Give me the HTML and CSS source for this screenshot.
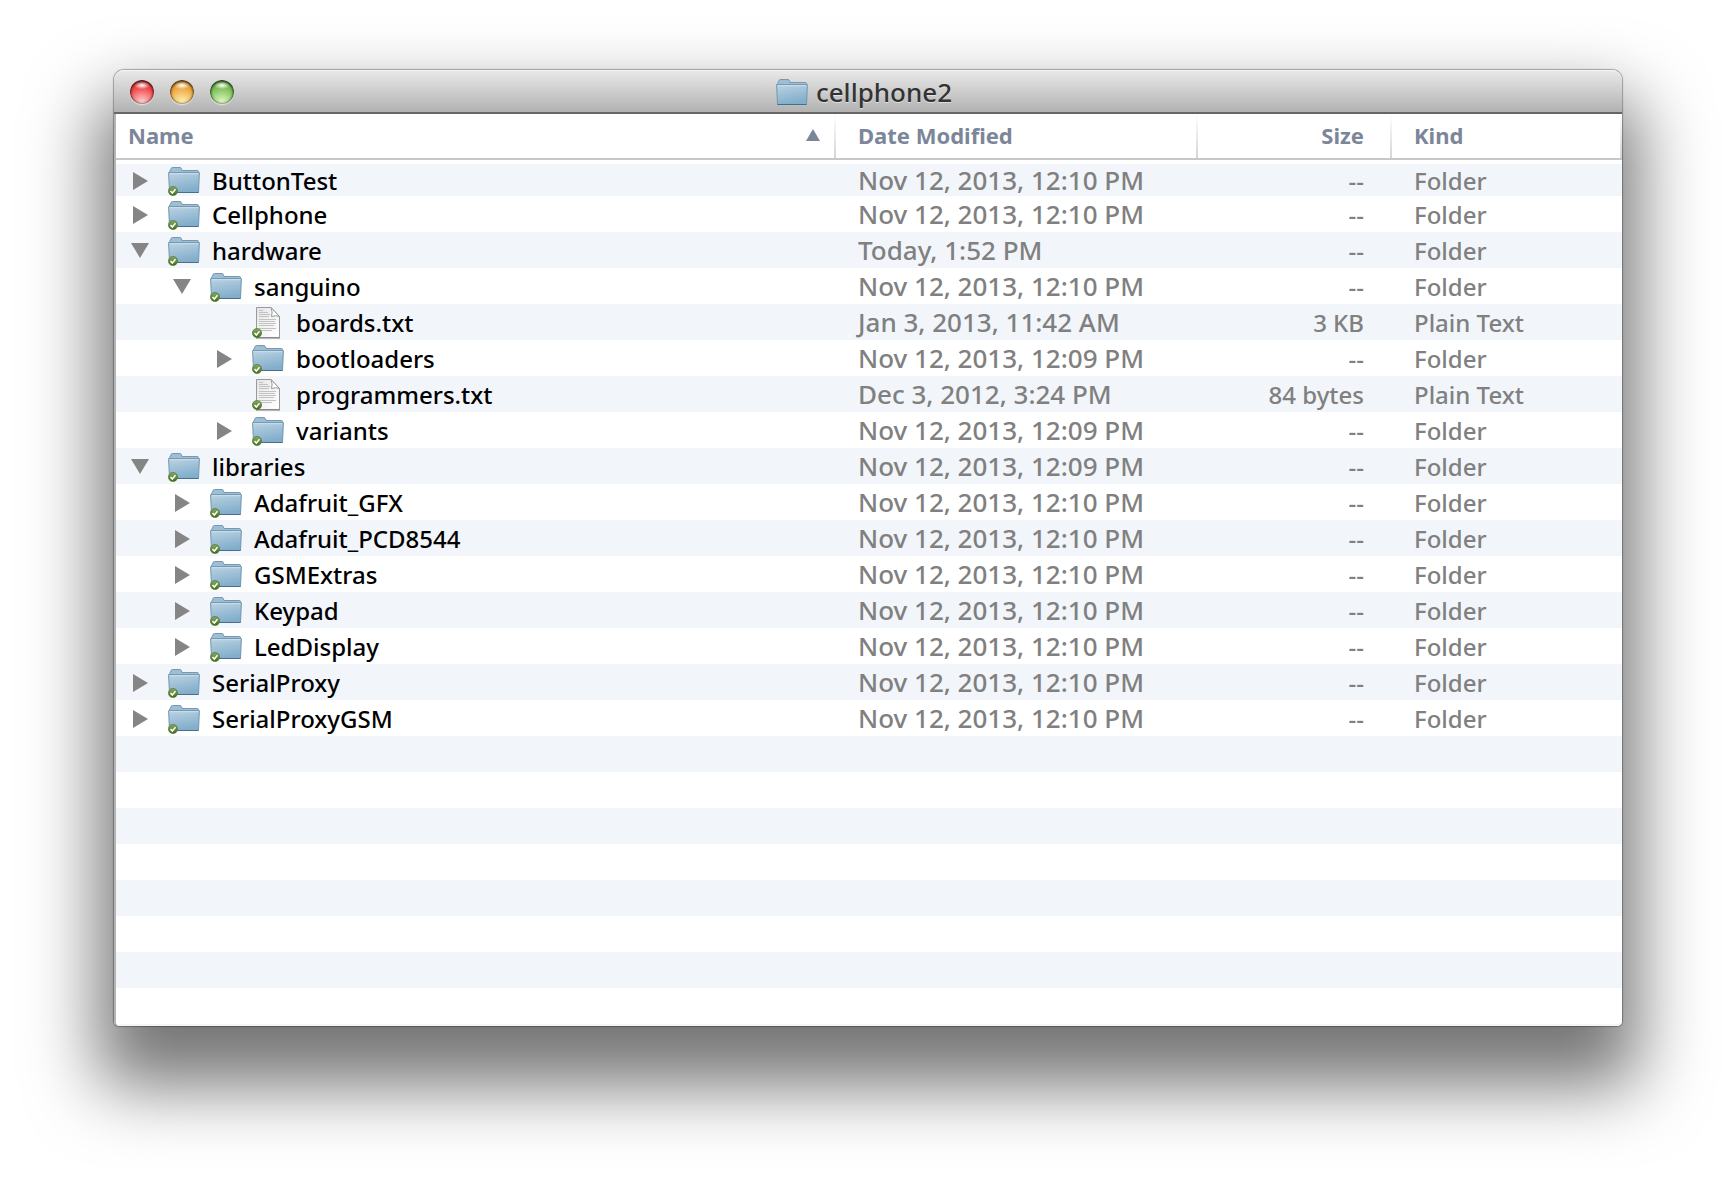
FILE: index.html
```
<!DOCTYPE html>
<html lang="en">
<head>
    <meta charset="UTF-8">
    <meta name="viewport" content="width=device-width, initial-scale=1.0">
    <title>cellphone2</title>
    <link rel="stylesheet" href="styles.css">
</head>
<body>
    <!-- shared icons -->
    <svg class="defs" width="0" height="0">
        <defs>
            <linearGradient id="front" x1="0" y1="0" x2="0.3" y2="1">
                <stop offset="0" stop-color="#bcd3e3"/>
                <stop offset="1" stop-color="#82aecb"/>
            </linearGradient>
            <linearGradient id="paper" x1="0" y1="0" x2="1" y2="1">
                <stop offset="0" stop-color="#e6e6e6"/>
                <stop offset="1" stop-color="#ffffff"/>
            </linearGradient>
            <linearGradient id="green" x1="0" y1="0" x2="0" y2="1">
                <stop offset="0" stop-color="#8aa868"/>
                <stop offset="1" stop-color="#3f6f14"/>
            </linearGradient>
            <symbol id="folder" viewBox="0 0 32 30">
                <path d="M1.5 8V4.500Q1.500 3.500 2.500 3.500L3 1.500Q3.300 .500 4.500 .500H12Q13 .500 13.300 1.500L14 3.500H29.500Q30.500 3.500 30.500 4.500V8Z" fill="#9dbfd6" stroke="#7699b1"/>
                <path d="M.6 5.600H31.400L30.500 25.500H1.500Z" fill="url(#front)" stroke="#6f96b0"/>
                <path d="M1.500 6.700H30.500" stroke="#cfe0eb"/>
                <path d="M1.500 25.500H30.500" stroke="#476f8c"/>
            </symbol>
            <symbol id="document" viewBox="0 0 32 32">
                <path d="M4.500 .500H19L27.500 9.500V30.500H4.500Z" fill="url(#paper)" stroke="#999"/>
                <path d="M4 31H28" stroke="#777"/>
                <path d="M7 3.500H11M7 5.500H16M7 7.500H18M7 9.500H17M7 12.500H24M7 14.500H23M7 16.500H24M7 18.500H22M7 21.500H24M7 23.500H20" stroke="#c2c2c2"/>
                <path d="M19 .500Q21 5 19.500 9.500Q24 8 27.500 9.500Z" fill="#fff" stroke="#999"/>
            </symbol>
            <symbol id="badge" viewBox="0 0 10 10">
                <circle cx="5" cy="5" r="4.600" fill="url(#green)" stroke="#4b7026" stroke-width=".6"/>
                <path d="M2.500 5L4.300 7L7.500 3.300" fill="none" stroke="#fff" stroke-width="1.500"/>
            </symbol>
        </defs>
    </svg>
    <main class="window">
        <header class="titlebar">
            <div class="controls">
                <button class="control close" aria-label="Close"></button>
                <button class="control minimize" aria-label="Minimize"></button>
                <button class="control zoom" aria-label="Zoom"></button>
            </div>
            <h1 class="title">
                <svg class="title-icon" viewBox="0 0 32 30"><use href="#folder" y="2" width="32" height="30"/></svg>
                cellphone2
            </h1>
        </header>
        <div class="content">
            <table class="files">
                <colgroup>
                    <col>
                    <col class="col-date">
                    <col class="col-size">
                    <col class="col-kind">
                </colgroup>
                <thead>
                    <tr>
                        <th scope="col" aria-sort="ascending"><div class="head"><span>Name</span><span class="sort"></span></div></th>
                        <th scope="col"><div class="head">Date Modified</div></th>
                        <th scope="col"><div class="head head-size">Size</div></th>
                        <th scope="col"><div class="head">Kind</div></th>
                    </tr>
                </thead>
                <tbody id="rows"></tbody>
            </table>
            <div class="empty"></div>
        </div>
    </main>
    <script src="script.js"></script>
</body>
</html>
```
FILE: styles.css
```
*{
    box-sizing: border-box;
}
body{
    margin: 0;
    padding: 70px 114px 156px;
    background-color: #fff;
    font-family: "Noto Sans", "Open Sans", sans-serif;
    font-size: 24px;
    font-weight: 500;
    color: #000;
}
button{
    padding: 0;
    border: none;
    background: none;
}
.defs{
    position: absolute;
}
.window{
    border-radius: 10px 10px 5px 5px;
    box-shadow: 0 0 1px 1px rgba(0,0,0,0.3), 0 44px 70px 16px rgba(0,0,0,0.54);
}
.titlebar{
    display: grid;
    grid-template-columns: 1fr auto 1fr;
    align-items: center;
    height: 44px;
    padding: 0 24px 0 16px;
    border-top: 1px solid #f4f4f4;
    border-bottom: 2px solid #666;
    border-radius: 10px 10px 0 0;
    background: linear-gradient(#e8e8e8, #b2b2b2);
}
.controls{
    display: flex;
    gap: 16px;
}
.control{
    width: 24px;
    height: 24px;
    border-radius: 50%;
    box-shadow: inset 0 2px 3px rgba(0,0,0,0.6), inset 0 0 2px 1px rgba(0,0,0,0.4), 0 1px 1px rgba(255,255,255,0.6);
}
.close{
    background: radial-gradient(ellipse 8px 4px at 50% 22%, #fff, transparent), radial-gradient(circle at 50% 95%, #ffd8d8, #f0484a 60%);
}
.minimize{
    background: radial-gradient(ellipse 8px 4px at 50% 22%, #fff, transparent), radial-gradient(circle at 50% 95%, #fff6b8, #eda640 60%);
}
.zoom{
    background: radial-gradient(ellipse 8px 4px at 50% 22%, #fff, transparent), radial-gradient(circle at 50% 95%, #e6fbc8, #7cbf58 60%);
}
.title{
    display: flex;
    align-items: center;
    gap: 8px;
    margin: 0;
    font-size: 26px;
    line-height: 40px;
    font-weight: 500;
    color: #333;
    text-shadow: 0 1px 0 rgba(255,255,255,0.5);
}
.title-icon{
    width: 32px;
    height: 30px;
}
.content{
    border-left: 2px solid #b4b4b4;
    border-radius: 0 0 5px 5px;
    background-color: #fff;
    overflow: hidden;
}
.files{
    width: 100%;
    table-layout: fixed;
    border-collapse: collapse;
}
.col-date{
    width: 362px;
}
.col-size{
    width: 194px;
}
.col-kind{
    width: 230px;
}
th, td{
    padding: 0;
    white-space: nowrap;
    text-align: left;
    font-weight: 500;
}
/* column headings */
.head{
    display: flex;
    justify-content: space-between;
    align-items: center;
    height: 46px;
    margin-bottom: 4px;
    padding: 0 16px 2px 22px;
    border-bottom: 2px solid #c8c8c8;
    background: linear-gradient(#fff, #d4d4d4) right / 2px 100% no-repeat;
    font-size: 22px;
    line-height: 40px;
    font-weight: 700;
    color: #7b8699;
}
th:first-child .head{
    padding-left: 12px;
}
.head-size{
    justify-content: flex-end;
    padding-right: 28px;
}
.sort{
    border: 7px solid transparent;
    border-top: none;
    border-bottom: 12px solid #7b8699;
}
/* rows */
tbody tr{
    height: 36px;
}
tbody tr:first-child{
    height: 32px;
}
tbody tr:nth-child(odd){
    background-color: #f2f6fb;
}
td{
    padding-top: 1px;
    line-height: 31px;
    color: #808080;
}
.date{
    padding-left: 22px;
    font-size: 26px;
}
.size{
    padding-right: 28px;
    text-align: right;
}
.kind{
    padding-left: 22px;
}
.item{
    display: flex;
    align-items: center;
    height: 31px;
    color: #000;
}
.level-0{
    padding-left: 12px;
}
.level-1{
    padding-left: 54px;
}
.level-2{
    padding-left: 96px;
}
.toggle{
    display: flex;
    justify-content: center;
    align-items: center;
    width: 24px;
    height: 24px;
    margin-right: 16px;
}
.toggle svg{
    width: 18px;
    height: 18px;
    fill: #858585;
}
.icon{
    width: 32px;
    height: 32px;
    margin-right: 12px;
    overflow: visible;
}
.empty{
    height: 290px;
    background: repeating-linear-gradient(#f2f6fb 0 36px, #fff 36px 72px);
}
```
FILE: script.js
```
// [level, state, name, date, size]
var files = [
    [0, "closed", "ButtonTest", "Nov 12, 2013, 12:10 PM", "--"],
    [0, "closed", "Cellphone", "Nov 12, 2013, 12:10 PM", "--"],
    [0, "open", "hardware", "Today, 1:52 PM", "--"],
    [1, "open", "sanguino", "Nov 12, 2013, 12:10 PM", "--"],
    [2, "file", "boards.txt", "Jan 3, 2013, 11:42 AM", "3 KB"],
    [2, "closed", "bootloaders", "Nov 12, 2013, 12:09 PM", "--"],
    [2, "file", "programmers.txt", "Dec 3, 2012, 3:24 PM", "84 bytes"],
    [2, "closed", "variants", "Nov 12, 2013, 12:09 PM", "--"],
    [0, "open", "libraries", "Nov 12, 2013, 12:09 PM", "--"],
    [1, "closed", "Adafruit_GFX", "Nov 12, 2013, 12:10 PM", "--"],
    [1, "closed", "Adafruit_PCD8544", "Nov 12, 2013, 12:10 PM", "--"],
    [1, "closed", "GSMExtras", "Nov 12, 2013, 12:10 PM", "--"],
    [1, "closed", "Keypad", "Nov 12, 2013, 12:10 PM", "--"],
    [1, "closed", "LedDisplay", "Nov 12, 2013, 12:10 PM", "--"],
    [0, "closed", "SerialProxy", "Nov 12, 2013, 12:10 PM", "--"],
    [0, "closed", "SerialProxyGSM", "Nov 12, 2013, 12:10 PM", "--"]
];
var arrows = {
    closed: "M2 0L17 9L2 18Z",
    open: "M0 1H18L9 16Z"
};

function toggle(state, name){
    if(state == "file"){
        return '<span class="toggle"></span>';
    }
    return '<button class="toggle" aria-label="' + name + '" aria-expanded="' + (state == "open") + '">' +
        '<svg viewBox="0 0 18 18"><path d="' + arrows[state] + '"/></svg></button>';
}

function row(file){
    var isFile = file[1] == "file";
    var picture = isFile ? '<use href="#document" width="32" height="32"/>' : '<use href="#folder" y="2" width="32" height="30"/>';
    return '<tr><td><div class="item level-' + file[0] + '">' + toggle(file[1], file[2]) +
        '<svg class="icon" viewBox="0 0 32 32">' + picture +
        '<use href="#badge" y="21" width="10" height="10"/></svg>' +
        '<span>' + file[2] + '</span></div></td>' +
        '<td class="date">' + file[3] + '</td>' +
        '<td class="size">' + file[4] + '</td>' +
        '<td class="kind">' + (isFile ? "Plain Text" : "Folder") + '</td></tr>';
}

document.querySelector("#rows").innerHTML = files.map(row).join("");
```
